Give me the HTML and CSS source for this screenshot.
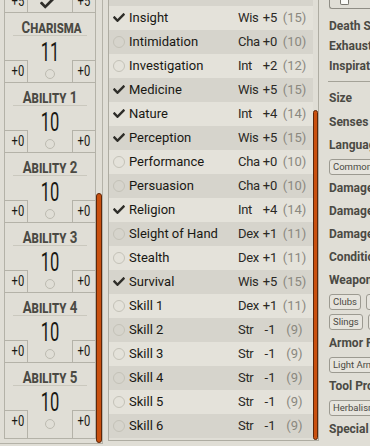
FILE: index.html
```html
<!DOCTYPE html>
<html lang="en">
<head>
<meta charset="utf-8">
<title>Character Sheet</title>
<link rel="stylesheet" href="styles.css">
</head>
<body>
<div class="sheet">

  <section class="abilities">
    <ul class="ability-list">
      <li class="ability ability--clip">
        <div class="ability-foot">
          <span class="mod mod--left"><span>+5</span></span>
          <span class="prof prof--on"><svg class="prof-check" viewBox="0 60 512 392" width="14" height="10.7"><path d="M173.9 439.4l-166.4-166.4c-10-10-10-26.2 0-36.2l36.2-36.2c10-10 26.2-10 36.2 0L192 312.7 432.1 72.6c10-10 26.2-10 36.2 0l36.2 36.2c10 10 10 26.2 0 36.2l-294.4 294.4c-10 10-26.2 10-36.2 0z"/></svg></span>
          <span class="mod mod--right"><span>+5</span></span>
        </div>
      </li>
      <li class="ability">
        <h4 class="ability-name"><span>Charisma</span></h4>
        <div class="ability-score"><span>11</span></div>
        <div class="ability-foot">
          <span class="mod mod--left"><span>+0</span></span>
          <span class="prof"><i class="prof-dot"></i></span>
          <span class="mod mod--right"><span>+0</span></span>
        </div>
      </li>
      <li class="ability">
        <h4 class="ability-name"><span>Ability 1</span></h4>
        <div class="ability-score"><span>10</span></div>
        <div class="ability-foot">
          <span class="mod mod--left"><span>+0</span></span>
          <span class="prof"><i class="prof-dot"></i></span>
          <span class="mod mod--right"><span>+0</span></span>
        </div>
      </li>
      <li class="ability">
        <h4 class="ability-name"><span>Ability 2</span></h4>
        <div class="ability-score"><span>10</span></div>
        <div class="ability-foot">
          <span class="mod mod--left"><span>+0</span></span>
          <span class="prof"><i class="prof-dot"></i></span>
          <span class="mod mod--right"><span>+0</span></span>
        </div>
      </li>
      <li class="ability">
        <h4 class="ability-name"><span>Ability 3</span></h4>
        <div class="ability-score"><span>10</span></div>
        <div class="ability-foot">
          <span class="mod mod--left"><span>+0</span></span>
          <span class="prof"><i class="prof-dot"></i></span>
          <span class="mod mod--right"><span>+0</span></span>
        </div>
      </li>
      <li class="ability">
        <h4 class="ability-name"><span>Ability 4</span></h4>
        <div class="ability-score"><span>10</span></div>
        <div class="ability-foot">
          <span class="mod mod--left"><span>+0</span></span>
          <span class="prof"><i class="prof-dot"></i></span>
          <span class="mod mod--right"><span>+0</span></span>
        </div>
      </li>
      <li class="ability ability--last">
        <h4 class="ability-name"><span>Ability 5</span></h4>
        <div class="ability-score"><span>10</span></div>
        <div class="ability-foot">
          <span class="mod mod--left"><span>+0</span></span>
          <span class="prof"><i class="prof-dot"></i></span>
          <span class="mod mod--right"><span>+0</span></span>
        </div>
      </li>
    </ul>
    <div class="track track--abilities"><div class="thumb"></div></div>
  </section>

  <section class="skills">
    <ul class="skill-list">
      <li class="skill skill--clip"></li>
      <li class="skill"><span class="skill-prof"><svg class="check" viewBox="0 60 512 392" width="12" height="9.2"><path d="M173.9 439.4l-166.4-166.4c-10-10-10-26.2 0-36.2l36.2-36.2c10-10 26.2-10 36.2 0L192 312.7 432.1 72.6c10-10 26.2-10 36.2 0l36.2 36.2c10 10 10 26.2 0 36.2l-294.4 294.4c-10 10-26.2 10-36.2 0z"/></svg></span><span class="skill-name">Insight</span><span class="skill-abl">Wis</span><span class="skill-mod">+5</span><span class="skill-passive">(15)</span></li>
      <li class="skill"><span class="skill-prof"><i class="dot"></i></span><span class="skill-name">Intimidation</span><span class="skill-abl">Cha</span><span class="skill-mod">+0</span><span class="skill-passive">(10)</span></li>
      <li class="skill"><span class="skill-prof"><i class="dot"></i></span><span class="skill-name">Investigation</span><span class="skill-abl">Int</span><span class="skill-mod">+2</span><span class="skill-passive">(12)</span></li>
      <li class="skill"><span class="skill-prof"><svg class="check" viewBox="0 60 512 392" width="12" height="9.2"><path d="M173.9 439.4l-166.4-166.4c-10-10-10-26.2 0-36.2l36.2-36.2c10-10 26.2-10 36.2 0L192 312.7 432.1 72.6c10-10 26.2-10 36.2 0l36.2 36.2c10 10 10 26.2 0 36.2l-294.4 294.4c-10 10-26.2 10-36.2 0z"/></svg></span><span class="skill-name">Medicine</span><span class="skill-abl">Wis</span><span class="skill-mod">+5</span><span class="skill-passive">(15)</span></li>
      <li class="skill"><span class="skill-prof"><svg class="check" viewBox="0 60 512 392" width="12" height="9.2"><path d="M173.9 439.4l-166.4-166.4c-10-10-10-26.2 0-36.2l36.2-36.2c10-10 26.2-10 36.2 0L192 312.7 432.1 72.6c10-10 26.2-10 36.2 0l36.2 36.2c10 10 10 26.2 0 36.2l-294.4 294.4c-10 10-26.2 10-36.2 0z"/></svg></span><span class="skill-name">Nature</span><span class="skill-abl">Int</span><span class="skill-mod">+4</span><span class="skill-passive">(14)</span></li>
      <li class="skill"><span class="skill-prof"><svg class="check" viewBox="0 60 512 392" width="12" height="9.2"><path d="M173.9 439.4l-166.4-166.4c-10-10-10-26.2 0-36.2l36.2-36.2c10-10 26.2-10 36.2 0L192 312.7 432.1 72.6c10-10 26.2-10 36.2 0l36.2 36.2c10 10 10 26.2 0 36.2l-294.4 294.4c-10 10-26.2 10-36.2 0z"/></svg></span><span class="skill-name">Perception</span><span class="skill-abl">Wis</span><span class="skill-mod">+5</span><span class="skill-passive">(15)</span></li>
      <li class="skill"><span class="skill-prof"><i class="dot"></i></span><span class="skill-name">Performance</span><span class="skill-abl">Cha</span><span class="skill-mod">+0</span><span class="skill-passive">(10)</span></li>
      <li class="skill"><span class="skill-prof"><i class="dot"></i></span><span class="skill-name">Persuasion</span><span class="skill-abl">Cha</span><span class="skill-mod">+0</span><span class="skill-passive">(10)</span></li>
      <li class="skill"><span class="skill-prof"><svg class="check" viewBox="0 60 512 392" width="12" height="9.2"><path d="M173.9 439.4l-166.4-166.4c-10-10-10-26.2 0-36.2l36.2-36.2c10-10 26.2-10 36.2 0L192 312.7 432.1 72.6c10-10 26.2-10 36.2 0l36.2 36.2c10 10 10 26.2 0 36.2l-294.4 294.4c-10 10-26.2 10-36.2 0z"/></svg></span><span class="skill-name">Religion</span><span class="skill-abl">Int</span><span class="skill-mod">+4</span><span class="skill-passive">(14)</span></li>
      <li class="skill"><span class="skill-prof"><i class="dot"></i></span><span class="skill-name">Sleight of Hand</span><span class="skill-abl">Dex</span><span class="skill-mod">+1</span><span class="skill-passive">(11)</span></li>
      <li class="skill"><span class="skill-prof"><i class="dot"></i></span><span class="skill-name">Stealth</span><span class="skill-abl">Dex</span><span class="skill-mod">+1</span><span class="skill-passive">(11)</span></li>
      <li class="skill"><span class="skill-prof"><svg class="check" viewBox="0 60 512 392" width="12" height="9.2"><path d="M173.9 439.4l-166.4-166.4c-10-10-10-26.2 0-36.2l36.2-36.2c10-10 26.2-10 36.2 0L192 312.7 432.1 72.6c10-10 26.2-10 36.2 0l36.2 36.2c10 10 10 26.2 0 36.2l-294.4 294.4c-10 10-26.2 10-36.2 0z"/></svg></span><span class="skill-name">Survival</span><span class="skill-abl">Wis</span><span class="skill-mod">+5</span><span class="skill-passive">(15)</span></li>
      <li class="skill"><span class="skill-prof"><i class="dot"></i></span><span class="skill-name">Skill 1</span><span class="skill-abl">Dex</span><span class="skill-mod">+1</span><span class="skill-passive">(11)</span></li>
      <li class="skill"><span class="skill-prof"><i class="dot"></i></span><span class="skill-name">Skill 2</span><span class="skill-abl">Str</span><span class="skill-mod">-1</span><span class="skill-passive">(9)</span></li>
      <li class="skill"><span class="skill-prof"><i class="dot"></i></span><span class="skill-name">Skill 3</span><span class="skill-abl">Str</span><span class="skill-mod">-1</span><span class="skill-passive">(9)</span></li>
      <li class="skill"><span class="skill-prof"><i class="dot"></i></span><span class="skill-name">Skill 4</span><span class="skill-abl">Str</span><span class="skill-mod">-1</span><span class="skill-passive">(9)</span></li>
      <li class="skill"><span class="skill-prof"><i class="dot"></i></span><span class="skill-name">Skill 5</span><span class="skill-abl">Str</span><span class="skill-mod">-1</span><span class="skill-passive">(9)</span></li>
      <li class="skill"><span class="skill-prof"><i class="dot"></i></span><span class="skill-name">Skill 6</span><span class="skill-abl">Str</span><span class="skill-mod">-1</span><span class="skill-passive">(9)</span></li>
    </ul>
    <div class="track track--skills"><div class="thumb"></div></div>
  </section>

  <section class="traits">
    <div class="insp-box"><span class="insp-check"></span></div>
    <ul class="counters">
      <li class="counter">Death Saves</li>
      <li class="counter">Exhaustion</li>
      <li class="counter">Inspiration</li>
    </ul>
    <ul class="trait-list">
      <li class="trait trait--size"><span class="trait-label">Size</span></li>
      <li class="trait"><span class="trait-label">Senses</span></li>
      <li class="trait"><span class="trait-label">Languages</span>
        <ul class="tags"><li class="tag">Common</li><li class="tag">Druidic</li></ul>
      </li>
      <li class="trait"><span class="trait-label">Damage Immunities</span></li>
      <li class="trait"><span class="trait-label">Damage Resistances</span></li>
      <li class="trait"><span class="trait-label">Damage Vulnerabilities</span></li>
      <li class="trait"><span class="trait-label">Condition Immunities</span></li>
      <li class="trait"><span class="trait-label">Weapon Proficiencies</span>
        <ul class="tags">
          <li class="tag">Clubs</li><li class="tag">Daggers</li><li class="tag">Darts</li><li class="tag">Javelins</li><li class="tag">Maces</li><li class="tag">Quarterstaffs</li><li class="tag">Scimitars</li><li class="tag">Sickles</li>
          <li class="tag-break"></li>
          <li class="tag">Slings</li><li class="tag">Spears</li>
        </ul>
      </li>
      <li class="trait"><span class="trait-label">Armor Proficiencies</span>
        <ul class="tags"><li class="tag">Light Armor</li><li class="tag">Medium Armor</li><li class="tag">Shields</li></ul>
      </li>
      <li class="trait"><span class="trait-label">Tool Proficiencies</span>
        <ul class="tags"><li class="tag">Herbalism Kit</li></ul>
      </li>
      <li class="trait"><span class="trait-label">Special Traits</span></li>
    </ul>
  </section>

</div>
</body>
</html>
```

FILE: styles.css
```css
* { box-sizing: border-box; }

html, body {
  margin: 0;
  padding: 0;
}

body {
  width: 370px;
  height: 446px;
  overflow: hidden;
  background: #e0ded6;
  font-family: Roboto, "Liberation Sans", sans-serif;
  color: #191813;
}

ul {
  list-style: none;
  margin: 0;
  padding: 0;
}

h4 { margin: 0; }

.sheet {
  display: flex;
  align-items: flex-start;
  width: 1200px;
}

/* ---------- Abilities column ---------- */
.abilities {
  display: flex;
  flex-shrink: 0;
  width: 103px;
  height: 444px;
  padding-left: 4px;
  border-right: 1px solid #b4b2a8;
  border-bottom: 1px solid #b4b2a8;
}

.ability-list {
  width: 92px;
  display: flex;
  flex-direction: column;
}

.ability {
  border: 1px solid #b4b2a8;
  border-top: 0;
}

.ability--clip {
  height: 13px;
  overflow: hidden;
  display: flex;
  flex-direction: column;
  justify-content: flex-end;
}

.ability-name {
  margin: 0 8px;
  height: 23px;
  padding-top: 3px;
  line-height: 22px;
  font-size: 17px;
  font-weight: 700;
  font-variant: small-caps;
  text-align: center;
  color: #4b4a44;
  border-bottom: 1px solid #cac8be;
  white-space: nowrap;
}

.ability-name span,
.ability-score span,
.mod span {
  display: inline-block;
}

.ability-name span { transform: scaleX(0.78); }

.ability-score {
  height: 24px;
  line-height: 34px;
  font-size: 25px;
  text-align: center;
  color: #191813;
}

.ability-score span { transform: scaleX(0.66); }

.ability-foot {
  display: grid;
  grid-template-columns: 23px 1fr 23px;
  height: 22px;
  flex-shrink: 0;
}

.ability--last .ability-foot { height: 28px; }

.mod {
  border-top: 1px solid #b4b2a8;
  line-height: 21px;
  font-size: 14px;
  text-align: center;
  color: #191813;
}

.mod span { transform: scaleX(0.8); }

.mod--left {
  border-right: 1px solid #b4b2a8;
  padding-left: 4px;
}

.mod--right { border-left: 1px solid #b4b2a8; }

.prof {
  display: flex;
  justify-content: center;
}

.prof--on { padding-right: 7px; }

.prof-dot {
  display: block;
  margin-top: 9px;
  width: 10px;
  height: 10px;
  border: 1px solid #bdbbb1;
  border-radius: 50%;
}

.prof-check {
  margin-top: 8px;
  fill: #2e2d29;
}

/* ---------- Scrollbars ---------- */
.track {
  display: flex;
  flex-direction: column;
  flex-shrink: 0;
}

.track--abilities {
  width: 6px;
  padding-top: 193px;
}

.track--skills {
  width: 5px;
  padding-top: 110px;
}

.thumb {
  flex: 1;
  background: #c9500f;
  border: 1px solid #5c270b;
  border-radius: 3px;
}

/* ---------- Skills ---------- */
.skills {
  display: flex;
  flex-shrink: 0;
  margin-left: 5px;
  width: 211px;
  border: 1px solid #aeaca2;
  border-top: 0;
}

.skill-list {
  flex: 1;
  padding-bottom: 2px;
}

.skill {
  display: grid;
  grid-template-columns: 20px 1fr 22px 20px 29px;
  padding-right: 4px;
  height: 24px;
  line-height: 24px;
  font-size: 13px;
  white-space: nowrap;
}

.skill:nth-child(odd) { background: #d6d4cc; }
.skill:nth-child(even) { background: #e4e2da; }

.skill--clip { height: 6px; }

.skill-prof {
  display: flex;
  align-items: center;
  justify-content: center;
}

.check { fill: #2e2d29; }

.dot {
  display: block;
  width: 12px;
  height: 12px;
  border: 1px solid #c4c2b8;
  border-radius: 50%;
}

.skill-name { color: #191813; }
.skill-abl { color: #2a2925; letter-spacing: -0.3px; }
.skill-mod { text-align: center; color: #2a2925; }
.skill-passive { text-align: center; color: #8a887f; }

/* ---------- Traits ---------- */
.traits {
  flex-shrink: 0;
  margin-left: 10px;
  width: 700px;
  font-size: 12px;
  font-weight: 700;
  color: #4b4a44;
  white-space: nowrap;
}

.insp-box {
  width: 60px;
  height: 9px;
  padding-left: 10px;
  border-left: 1px solid #8f8d85;
  border-bottom: 1px solid #8f8d85;
  border-bottom-left-radius: 3px;
}

.insp-check {
  display: block;
  width: 9px;
  height: 5px;
  background: #fbfbf8;
  border: 1px solid #77756e;
  border-top: 0;
  border-radius: 0 0 2px 2px;
}

.counters {
  margin-top: 7px;
  padding-bottom: 5px;
  border-bottom: 1px solid #a4a298;
  margin-left: -1px;
  padding-left: 1px;
}

.counter {
  height: 20px;
  line-height: 20px;
}

.trait-list { margin-top: 3px; }

.trait-label {
  display: block;
  height: 23px;
  line-height: 23px;
}

.trait--size .trait-label {
  height: 26px;
  line-height: 26px;
}

.tags {
  display: flex;
  flex-wrap: wrap;
  column-gap: 5px;
}

.tag {
  margin: 2px 0;
  height: 16px;
  line-height: 14px;
  padding: 0 3px;
  border: 1px solid #9c9a91;
  border-radius: 3px;
  font-size: 9.5px;
  font-weight: 400;
  color: #4b4a44;
  background: #e6e4dd;
}

.tag-break {
  flex-basis: 100%;
  height: 0;
}
```
